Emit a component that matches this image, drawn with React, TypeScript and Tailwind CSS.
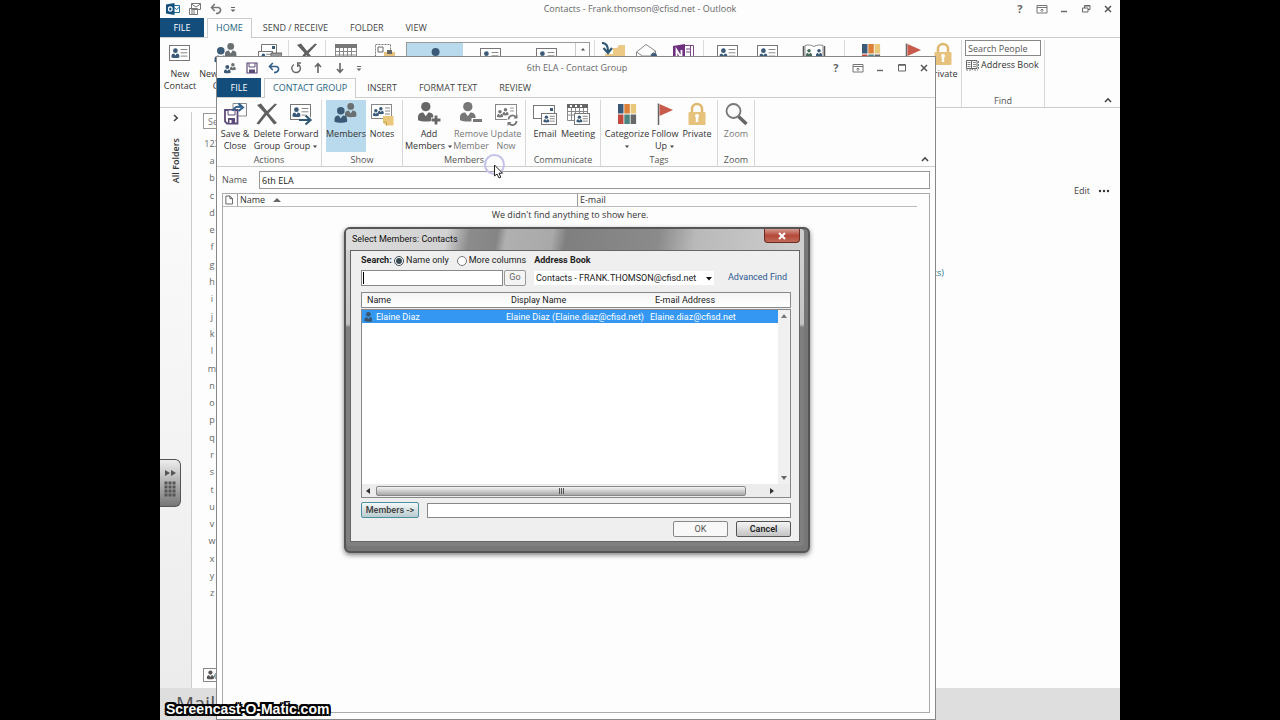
import type { ReactNode } from "react";

const LETTERS = "abcdefghijklmnopqrstuvwxyz".split("");

/* ---------- glyph parts ---------- */

const Person = ({ x = 0, y = 0, s = 1, fill = "#3b5a78" }) => (
  <g transform={`translate(${x} ${y}) scale(${s})`} fill={fill}>
    <circle cx="6" cy="3.6" r="3.6" />
    <path d="M0 14v-2.5C0 9 2 8 4 8l2 3 2-3c2 0 4 1 4 3.500V14c-3 1.300-9 1.300-12 0z" />
  </g>
);

const Card = ({ x = 0, y = 0, w = 20, h = 15, color = "#3b5a78" }) => (
  <g>
    <rect x={x + 0.5} y={y + 0.5} width={w} height={h} fill="#fff" stroke="#777" />
    <Person x={x + 2.5} y={y + h * 0.22} s={h / 23} fill={color} />
    <path
      d={`M${x + w * 0.58} ${y + h * 0.3}h${w * 0.34}M${x + w * 0.58} ${y + h * 0.52}h${w * 0.34}M${x + w * 0.58} ${y + h * 0.74}h${w * 0.34}`}
      stroke="#888"
    />
  </g>
);

const Svg = ({ children, className = "size-6" }: { children: ReactNode; className?: string }) => (
  <svg viewBox="0 0 24 24" fill="none" className={`shrink-0 ${className}`} aria-hidden="true">
    {children}
  </svg>
);

const CardIcon = () => (
  <Svg>
    <Card x={1} y={3} />
  </Svg>
);

const PeopleIcon = () => (
  <Svg>
    <Person x={11} y={1} s={0.95} fill="#6a7072" />
    <Person x={0.5} y={5} s={1.05} />
  </Svg>
);

const SaveCloseIcon = () => (
  <Svg>
    <path d="M10 1.500h13.500v12.500H10z" fill="#fff" stroke="#888" />
    <path d="M2 8h12.500v13.500H4L2 19.500z" fill="#fff" stroke="#5c4a78" strokeWidth="1.800" />
    <path d="M5 8h7v5H5z" fill="#fff" stroke="#5c4a78" />
    <path d="M5 16h7v6H5z" fill="#5c4a78" />
    <path d="M6.500 18h2v3h-2z" fill="#fff" />
    <path d="M10 9c1-4 4-5 8-4M15.500 1.500l4.500 4-4.500 3.500" stroke="#2f5f8a" strokeWidth="2" />
  </Svg>
);

const DeleteIcon = () => (
  <Svg>
    <path d="M2 3l4-1.500 6 7.500 8-7.500 2 .8-8.400 9L22 21l-3 1.500-7.500-9.500L4 22.500l-2.500-1L9.500 11z" fill="#606060" />
  </Svg>
);

const ForwardIcon = () => (
  <Svg>
    <Card x={1} y={2} />
    <path d="M10 18h11M16.500 13l5 5-5 5" stroke="#fff" strokeWidth="4" />
    <path d="M10 18h11.500M16.500 13.500l5 4.500-5 4.500" stroke="#2f5875" strokeWidth="2.200" />
  </Svg>
);

const NotesIcon = () => (
  <Svg>
    <rect x="1.500" y="2.500" width="20" height="14" fill="#fff" stroke="#888" />
    <Person x={3} y={7} s={0.48} />
    <Person x={8} y={5} s={0.48} />
    <path d="M15 6h5M15 9h5M15 12h5" stroke="#888" />
    <path d="M13 14h10.500v9.500H16l-3-3z" fill="#e9c77b" />
    <path d="M13 20h3.500v3.500" stroke="#c9a556" />
  </Svg>
);

const AddMemberIcon = () => (
  <Svg>
    <Person x={1} y={0} s={1.3} fill="#666" />
    <path d="M19 13v10M14 18h10" stroke="#fff" strokeWidth="5" />
    <path d="M19 13.500v9M14.500 18h9" stroke="#666" strokeWidth="2.800" />
  </Svg>
);

const RemoveMemberIcon = () => (
  <Svg>
    <Person x={1} y={0} s={1.3} fill="#777" />
    <path d="M12.500 18.500H24" stroke="#fff" strokeWidth="5" />
    <path d="M14 18.500h9" stroke="#777" strokeWidth="3" />
  </Svg>
);

const UpdateIcon = () => (
  <Svg>
    <rect x="1.500" y="2.500" width="21" height="15" fill="#fff" stroke="#888" />
    <Person x={3} y={8} s={0.5} fill="#777" />
    <Person x={8.500} y={6} s={0.5} fill="#777" />
    <path d="M16 6h4M16 9h4" stroke="#999" />
    <circle cx="18.500" cy="18" r="5.500" fill="#fff" />
    <path d="M14.500 17.500a4 4 0 0 1 7.500-2M22.500 19a4 4 0 0 1-7.500 2" stroke="#777" strokeWidth="1.800" />
    <path d="M23.500 12.500v4h-4zM13.500 24v-4h4z" fill="#777" />
  </Svg>
);

const EmailIcon = () => (
  <Svg>
    <rect x=".5" y="3.500" width="21" height="13" fill="#fff" stroke="#777" />
    <path d="M17 6h3v3h-3z" fill="#3b5a78" />
    <Card x={8} y={11} w={15} h={11} />
  </Svg>
);

const MeetingIcon = () => (
  <Svg>
    <path d="M1.500 2.500h20v16h-20zM1.500 9.500h20M1.500 13h20M5.500 5v13.500M9.500 5v13.500M13.500 5v13.500M17.500 5v13.500" fill="#fff" stroke="#888" />
    <path d="M1 2h21v4H1z" fill="#666" />
    <path d="M4 3h2v2H4zM9 3h2v2H9zM14 3h2v2h-2z" fill="#fff" />
    <Card x={8} y={11} w={15} h={11} />
  </Svg>
);

const CalendarIcon = () => (
  <Svg>
    <path d="M1.500 2.500h21v18h-21zM1.500 9.500h21M1.500 13h21M5.500 5v15M9.500 5v15M13.500 5v15M17.500 5v15" fill="#fff" stroke="#888" />
    <path d="M1 2h22v4H1z" fill="#777" />
  </Svg>
);

const CategorizeIcon = () => (
  <Svg>
    <path d="M3 2h5.500v9.500H3z" fill="#3b5a78" />
    <path d="M9.300 2h5.500v9.500H9.300z" fill="#dd7f35" />
    <path d="M15.600 2h5.500v9.500h-5.500z" fill="#e9c77b" />
    <path d="M3 12.500h5.500V22H3z" fill="#c4493d" />
    <path d="M9.300 12.500h5.500V22H9.300z" fill="#4d8580" />
    <path d="M15.600 12.500h5.500V22h-5.500z" fill="#686868" />
  </Svg>
);

const FlagIcon = () => (
  <Svg>
    <path d="M5.500 1.500V23" stroke="#666" strokeWidth="1.500" />
    <path d="M6.500 2L20 8 6.500 14z" fill="#c75a49" />
  </Svg>
);

const LockIcon = () => (
  <Svg>
    <path d="M7 11V7a5 5 0 0 1 10 0v4" stroke="#deb86e" strokeWidth="2.500" />
    <rect x="3.500" y="10" width="17" height="13" rx="1" fill="#e6c27c" />
    <path d="M10 14a2 2 0 1 1 3.200 1.500V20h-2.400v-4.500z" fill="#fff" />
  </Svg>
);

const ZoomIcon = () => (
  <Svg>
    <circle cx="9.500" cy="9" r="7" fill="#fafafa" stroke="#777" strokeWidth="1.800" />
    <path d="M14.500 14.500l8 7.500" stroke="#666" strokeWidth="3.500" />
  </Svg>
);

const MoveIcon = () => (
  <Svg>
    <path d="M12 6h4l2-3h6v20H4V12h8z" fill="#ecca85" />
    <path d="M1 1c4 0 6 2 6 8M2.500 6L7 11l4-5" stroke="#2f5875" strokeWidth="2.200" />
  </Svg>
);

const EnvelopeIcon = () => (
  <Svg>
    <path d="M1.500 10L11 2.500 20.500 9v10h-19z" fill="#fff" stroke="#888" />
    <path d="M1.500 10l6 4h7l6-5" stroke="#888" />
    <circle cx="19" cy="14" r="3" fill="#3b5a78" />
  </Svg>
);

const OneNoteIcon = () => (
  <Svg>
    <path d="M13 3.500h9.500v17H13zM15 7h5M15 10h5M19.500 4v16" fill="#fff" stroke="#7c4a86" />
    <path d="M2 4l12-2v21L2 21z" fill="#6f2f7f" />
    <path d="M5.500 16V8l5 8V8" stroke="#fff" strokeWidth="1.800" />
  </Svg>
);

const BookIcon = () => (
  <Svg>
    <path d="M1.500 4v17M12 5v16M22.500 4v17" stroke="#555" strokeWidth="1.500" />
    <path d="M3 3.500c3-1 6-.5 9 1 3-1.500 6-2 9-1V20H3z" fill="#fff" stroke="#888" />
    <Person x={4} y={7} s={0.5} fill="#456b5a" />
    <Person x={14} y={7} s={0.5} />
  </Svg>
);

const ItemsIcon = () => (
  <Svg>
    <path d="M3.500 2.500h15v11h-15z" fill="#fff" stroke="#777" />
    <path d="M14 4h3v3h-3z" fill="#3b5a78" />
    <Card x={0} y={9} w={14} h={11} />
    <path d="M13 11h11v11H13z" fill="#999" stroke="#666" />
  </Svg>
);

const ClipIcon = () => (
  <Svg>
    <path d="M3.500 2.500h15v18h-15z" fill="#fff" stroke="#777" strokeDasharray="2 1" />
    <path d="M6 5h5v5H6z" fill="#fff" stroke="#666" />
    <path d="M12 10h11v12H12z" fill="#e6c27c" />
    <path d="M15 8h5v4h-5z" fill="#666" />
  </Svg>
);

const OutlookLogo = () => (
  <svg viewBox="0 0 14 12" className="h-3 w-3.5" fill="none" aria-hidden="true">
    <path d="M7 2.500h6.500v7H7zM7.500 4l3 2.500 3-2.500" fill="#fff" stroke="#1a6fa5" />
    <path d="M0 1.500L8.500 0v12L0 10.500z" fill="#14507e" />
    <ellipse cx="4.300" cy="6" rx="1.800" ry="2.200" stroke="#fff" strokeWidth="1.200" />
  </svg>
);

const SendReceiveIcon = () => (
  <svg viewBox="0 0 14 14" className="size-3.5" fill="none" aria-hidden="true">
    <path d="M3.500 1.500h9v6h-9zM3.500 2l4.500 3 4.500-3M1.500 6.500h8v6h-8zM3 9h4M3 11h4" fill="#fff" stroke="#777" />
  </svg>
);

const UndoIcon = ({ color = "#777" }) => (
  <svg viewBox="0 0 12 12" className="size-3" fill="none" stroke={color} strokeWidth="1.600" aria-hidden="true">
    <path d="M1.500 4.500H8a2.500 2.500 0 0 1 2.500 3.200C10 9.500 8.500 10.500 6 10.500M4.800 1L1.500 4.500 4.800 8" />
  </svg>
);

const RedoIcon = () => (
  <svg viewBox="0 0 12 12" className="size-3" fill="none" stroke="#666" strokeWidth="1.400" aria-hidden="true">
    <path d="M4 2.500A4.300 4.300 0 1 0 8.500 2.700M7 1h4M7.700 1v4" />
  </svg>
);

const ArrowIcon = ({ down = false }) => (
  <svg viewBox="0 0 12 12" className="size-3" fill="none" stroke="#666" strokeWidth="1.600" aria-hidden="true">
    <path d={down ? "M6 1v9M3 7l3 3.300L9 7" : "M6 11V2M3 5l3-3.300L9 5"} />
  </svg>
);

const FloppyIcon = () => (
  <svg viewBox="0 0 12 12" className="size-3" fill="none" aria-hidden="true">
    <path d="M1 1h10v10H1z" fill="#fff" stroke="#5c4a78" strokeWidth="1.200" />
    <path d="M3 1v4h6V1" stroke="#5c4a78" />
    <path d="M3 7.500h6V11H3z" fill="#5c4a78" />
  </svg>
);

const MoreIcon = () => (
  <svg viewBox="0 0 6 8" className="h-2 w-1.5" aria-hidden="true">
    <path d="M1 2.500h4" stroke="#666" />
    <path d="M.5 4.500h5L3 7z" fill="#666" />
  </svg>
);

const Caret = () => (
  <svg viewBox="0 0 6 4" className="inline-block h-1 w-1.5 align-middle" aria-hidden="true">
    <path d="M1 .5h4L3 3z" fill="#444" />
  </svg>
);

const ChevronUp = () => (
  <svg viewBox="0 0 8 6" className="h-1.5 w-2" fill="none" stroke="#444" strokeWidth="1.600" aria-hidden="true">
    <path d="M1 5l3-3.200L7 5" />
  </svg>
);

const AddressBookIcon = () => (
  <svg viewBox="0 0 14 12" className="h-3 w-3.5" fill="none" aria-hidden="true">
    <path d="M1.500 1.500h5v8h-5zM6.500 1.500h5.500v8H6.500z" fill="#fff" stroke="#666" />
    <path d="M2.500 3.500h3M2.500 5.500h3M2.500 7.500h3M8 3.500h3M8 5.500h3M8 7.500h3" stroke="#888" />
    <path d="M13.500 2v8M1 11h5l1-1 1 1h5" stroke="#777" strokeDasharray="2 1" />
  </svg>
);

/* ---------- window chrome ---------- */

const Caption = ({ restore = false }) => (
  <div className="flex items-center gap-2.5">
    <button type="button" aria-label="Help" className="w-3 text-[11px] font-bold leading-3 text-[#666]">
      ?
    </button>
    <button type="button" aria-label="Ribbon display options">
      <svg viewBox="0 0 12 12" className="size-3" fill="none" stroke="#777">
        <path d="M1 2.500h10v7.500H1zM1 4.500h10M6 9V6M4.500 7.500L6 6l1.500 1.500" />
      </svg>
    </button>
    <button type="button" aria-label="Minimize">
      <svg viewBox="0 0 12 12" className="size-3" stroke="#666" strokeWidth="1.400">
        <path d="M3 8.500h6" />
      </svg>
    </button>
    <button type="button" aria-label={restore ? "Restore" : "Maximize"}>
      <svg viewBox="0 0 12 12" className="size-3" fill="none" stroke="#666">
        {restore ? (
          <path d="M2.500 5h5.500v4H2.500zM4.500 5V2.500H10v4H8M4.500 3H10" />
        ) : (
          <path d="M2.500 2.500h7v6.500h-7zM2.500 3.300h7" />
        )}
      </svg>
    </button>
    <button type="button" aria-label="Close">
      <svg viewBox="0 0 12 12" className="size-3" stroke="#555" strokeWidth="1.500">
        <path d="M3 3l6 6M9 3l-6 6" />
      </svg>
    </button>
  </div>
);

type BigButtonProps = {
  icon: ReactNode;
  lines?: string[];
  caret?: boolean;
  label?: string;
  width: string;
  active?: boolean;
  muted?: boolean;
};

const BigButton = ({ icon, lines = [], caret, label, width, active, muted }: BigButtonProps) => (
  <button
    type="button"
    aria-label={label}
    className={`flex h-13 shrink-0 flex-col items-center whitespace-nowrap leading-3 ${width} ${active ? "bg-[#b9d9ec]" : ""} ${muted ? "text-[#777]" : "text-[#333]"}`}
  >
    <span className="mb-0.5 mt-0.5">{icon}</span>
    {lines.map((line, i) => (
      <span key={line} className="h-3">
        {line}
        {caret && i === 1 && (
          <span className="ml-0.5">
            <Caret />
          </span>
        )}
      </span>
    ))}
    {caret && lines.length === 1 && (
      <span className="h-3">
        <Caret />
      </span>
    )}
  </button>
);

const Group = ({ title, children }: { title: string; children: ReactNode }) => (
  <div className="flex shrink-0 flex-col justify-between border-r border-[#d8d8d8] px-1">
    <div className="flex">{children}</div>
    <div className="text-center leading-3 text-[#555]">{title}</div>
  </div>
);

const Divider = () => <div className="h-16 w-px shrink-0 bg-[#dcdcdc]" />;

const Tab = ({ children, active }: { children: ReactNode; active?: boolean }) => (
  <button
    type="button"
    className={
      active
        ? "-mb-px h-5 border border-b-0 border-[#ccc] bg-[#fdfdfd] px-2 pb-0.5 text-[#1e6580]"
        : "h-[19px] px-[11px] text-[#444]"
    }
  >
    {children}
  </button>
);

const FileTab = () => (
  <button type="button" className="mr-[3px] h-[19px] w-11 bg-[#124d7c] text-white">
    FILE
  </button>
);

/* ---------- main window ---------- */

const MainWindow = () => (
  <div className="flex h-full flex-col">
    <header className="flex h-[18px] items-center justify-between pl-1.5 pr-1.5">
      <div className="flex w-40 items-center gap-2">
        <OutlookLogo />
        <SendReceiveIcon />
        <UndoIcon />
        <MoreIcon />
      </div>
      <h1 className="text-[#666]">Contacts - Frank.thomson@cfisd.net - Outlook</h1>
      <div className="flex w-40 justify-end">
        <Caption restore />
      </div>
    </header>
    <nav className="flex border-b border-[#ccc]">
      <FileTab />
      <Tab active>HOME</Tab>
      <Tab>SEND / RECEIVE</Tab>
      <Tab>FOLDER</Tab>
      <Tab>VIEW</Tab>
    </nav>

    <div className="flex h-[70px] shrink-0 items-stretch overflow-hidden border-b border-[#ccc] pt-0.5">
      <BigButton width="w-10" icon={<CardIcon />} lines={["New", "Contact"]} />
      <BigButton width="w-13" icon={<PeopleIcon />} lines={["New Contact", "Group"]} />
      <BigButton width="w-9" icon={<ItemsIcon />} label="New Items" />
      <Divider />
      <BigButton width="w-9" icon={<DeleteIcon />} label="Delete" />
      <Divider />
      <BigButton width="w-10" icon={<CalendarIcon />} label="Meeting" />
      <BigButton width="w-9" icon={<ClipIcon />} label="More" />
      <div className="mx-1 mt-0.5 flex h-14 w-[184px] shrink-0 border border-[#999]">
        <BigButton width="w-14" icon={<Svg><Person x={6} y={3} s={1.1} /></Svg>} label="People" active />
        <BigButton width="w-14" icon={<CardIcon />} label="Business Card" />
        <BigButton width="w-14" icon={<CardIcon />} label="Card" />
        <div className="flex flex-1 justify-center border-l border-[#ccc] pt-1">
          <svg viewBox="0 0 6 4" className="h-1 w-1.5" aria-hidden="true">
            <path d="M1 3.500h4L3 1z" fill="#555" />
          </svg>
        </div>
      </div>
      <Divider />
      <BigButton width="w-9" icon={<MoveIcon />} label="Move" />
      <BigButton width="w-8" icon={<EnvelopeIcon />} label="Mail Merge" />
      <BigButton width="w-10" icon={<OneNoteIcon />} label="OneNote" />
      <Divider />
      <BigButton width="w-12" icon={<CardIcon />} label="Forward Contact" />
      <BigButton width="w-8" icon={<CardIcon />} label="Share Contacts" />
      <BigButton width="w-15" icon={<BookIcon />} label="Open Shared Contacts" />
      <Divider />
      <BigButton width="w-13" icon={<CategorizeIcon />} label="Categorize" />
      <BigButton width="w-8" icon={<FlagIcon />} label="Follow Up" />
      <BigButton width="w-7" icon={<LockIcon />} lines={["Private"]} />
      <div className="ml-1 flex flex-col justify-between border-x border-[#d8d8d8] px-[3px]">
        <div>
          <input
            aria-label="Search People"
            placeholder="Search People"
            className="block h-4 w-[76px] border border-[#888] bg-white px-0.5 placeholder:text-[#555]"
          />
          <button type="button" className="mt-0.5 flex items-center gap-0.5 whitespace-nowrap text-[#333]">
            <AddressBookIcon />
            Address Book
          </button>
        </div>
        <div className="text-center leading-3 text-[#555]">Find</div>
      </div>
      <button type="button" aria-label="Collapse the ribbon" className="ml-auto self-end pb-1 pr-2">
        <ChevronUp />
      </button>
    </div>

    <div className="flex min-h-0 flex-1">
      <aside className="mt-1 flex w-8 shrink-0 flex-col items-center border-r border-[#ccc] bg-linear-to-b from-[#fdfdfd] to-[#ececec]">
        <button type="button" aria-label="Expand the folder pane" className="rotate-90 p-1 pl-0.5">
          <ChevronUp />
        </button>
        <span className="mt-3 rotate-180 font-semibold leading-4 text-[#333] [writing-mode:vertical-rl]">All Folders</span>
      </aside>
      <section className="flex w-60 shrink-0 flex-col items-start pl-[11px] pt-[5px]">
        <input
          aria-label="Search Contacts"
          placeholder="Search Contacts"
          className="mb-1.5 h-4 w-52 border border-[#999] px-1 placeholder:text-[#777]"
        />
        <ul className="flex min-h-0 w-4.5 flex-1 flex-col items-center text-[#666]">
          {["123", ...LETTERS].map((l) => (
            <li key={l} className="flex flex-1 items-center leading-3">
              {l}
            </li>
          ))}
        </ul>
        <div className="mb-1.5 mt-[66px] flex h-3.5 w-6 items-center border border-[#888] px-0.5">
          <svg viewBox="0 0 20 12" className="h-3 w-5" fill="none" aria-hidden="true">
            <Person x={1} y={1} s={0.65} fill="#555" />
            <circle cx="13" cy="7" r="3.500" stroke="#55707a" />
            <path d="M9.500 7h7M13 3.500v7" stroke="#55707a" />
          </svg>
        </div>
      </section>
      <section className="flex-1 pt-[75px] text-right">
        <div className="flex items-center justify-end gap-2 pr-2.5 leading-4 text-[#444]">
          <button type="button">Edit</button>
          <button type="button" aria-label="More actions">
            <svg viewBox="0 0 12 4" className="h-1 w-3" fill="#333" aria-hidden="true">
              <circle cx="2" cy="2" r="1.200" />
              <circle cx="6" cy="2" r="1.200" />
              <circle cx="10" cy="2" r="1.200" />
            </svg>
          </button>
        </div>
        <a href="#contacts" className="mr-44 mt-16 inline-block pt-0.5 leading-4 text-[#2a7a92]">
          (Contacts)
        </a>
      </section>
    </div>
    <footer className="h-8 shrink-0 bg-[#dedede] pl-4 text-[20px] leading-8 text-[#555]">Mail</footer>
  </div>
);

/* ---------- contact group window ---------- */

const ContactGroupWindow = () => (
  <div className="absolute bottom-0 left-14 right-46 top-14 flex flex-col border border-[#888] bg-[#fdfdfd]">
    <header className="flex h-[21px] items-center justify-between pl-[7px] pr-[5px]">
      <div className="flex w-40 items-center gap-2.5">
        <svg viewBox="0 0 12 12" className="size-3" aria-hidden="true">
          <Person x={6} y={1} s={0.48} fill="#6a7072" />
          <Person x={0} y={3} s={0.55} />
        </svg>
        <FloppyIcon />
        <UndoIcon color="#2f5f8a" />
        <RedoIcon />
        <ArrowIcon />
        <ArrowIcon down />
        <MoreIcon />
      </div>
      <h2 className="text-[#666]">6th ELA - Contact Group</h2>
      <div className="flex w-40 justify-end">
        <Caption />
      </div>
    </header>
    <nav className="flex border-b border-[#ccc]">
      <FileTab />
      <Tab active>CONTACT GROUP</Tab>
      <Tab>INSERT</Tab>
      <Tab>FORMAT TEXT</Tab>
      <Tab>REVIEW</Tab>
    </nav>
    <div className="flex h-[69px] shrink-0 border-b border-[#ccc] pt-0.5">
      <Group title="Actions">
        <BigButton width="w-7" icon={<SaveCloseIcon />} lines={["Save &", "Close"]} />
        <BigButton width="w-9" icon={<DeleteIcon />} lines={["Delete", "Group"]} />
        <BigButton width="w-8" icon={<ForwardIcon />} lines={["Forward", "Group"]} caret />
      </Group>
      <Group title="Show">
        <BigButton width="w-10" icon={<PeopleIcon />} lines={["Members"]} active />
        <BigButton width="w-8" icon={<NotesIcon />} lines={["Notes"]} />
      </Group>
      <Group title="Members">
        <BigButton width="w-11" icon={<AddMemberIcon />} lines={["Add", "Members"]} caret />
        <BigButton width="w-10" icon={<RemoveMemberIcon />} lines={["Remove", "Member"]} muted />
        <BigButton width="w-[30px]" icon={<UpdateIcon />} lines={["Update", "Now"]} muted />
      </Group>
      <Group title="Communicate">
        <BigButton width="w-[30px]" icon={<EmailIcon />} lines={["Email"]} />
        <BigButton width="w-9" icon={<MeetingIcon />} lines={["Meeting"]} />
      </Group>
      <Group title="Tags">
        <BigButton width="w-11" icon={<CategorizeIcon />} lines={["Categorize"]} caret />
        <BigButton width="w-8" icon={<FlagIcon />} lines={["Follow", "Up"]} caret />
        <BigButton width="w-8" icon={<LockIcon />} lines={["Private"]} />
      </Group>
      <Group title="Zoom">
        <BigButton width="w-7" icon={<ZoomIcon />} lines={["Zoom"]} muted />
      </Group>
      <button type="button" aria-label="Collapse the ribbon" className="ml-auto self-end pb-1 pr-1.5">
        <ChevronUp />
      </button>
    </div>
    <div className="flex min-h-0 flex-1 flex-col gap-1 px-[5px] pb-1.5 pt-1">
      <div className="flex items-center">
        <label htmlFor="group-name" className="w-[37px] text-[#555]">
          Name
        </label>
        <input
          id="group-name"
          defaultValue="6th ELA"
          className="h-[18px] min-w-0 flex-1 border border-[#999] bg-white px-0.5 text-[#222]"
        />
      </div>
      <div className="flex-1 border border-[#aaa] pr-3">
        <table className="w-full text-left leading-3 text-[#333]">
          <thead>
            <tr className="border-b border-[#bbb]">
              <th className="w-[51%] pl-0.5 font-normal">
                <span className="flex items-center gap-1">
                  <svg viewBox="0 0 9 10" className="h-2.5 w-2" fill="#fff" stroke="#555" aria-hidden="true">
                    <path d="M1 .5h4.500l3 3v6H1zM5.500.5v3h3" />
                  </svg>
                  <span className="border-l border-[#999] pl-0.5">Name</span>
                  <svg viewBox="0 0 8 4" className="ml-1 h-1 w-2" aria-hidden="true">
                    <path d="M0 4h8L4 0z" fill="#666" />
                  </svg>
                </span>
              </th>
              <th className="font-normal">
                <span className="block border-l border-[#999] pl-0.5">E-mail</span>
              </th>
            </tr>
          </thead>
          <tbody>
            <tr>
              <td colSpan={2} className="pt-0.5 text-center">
                We didn&apos;t find anything to show here.
              </td>
            </tr>
          </tbody>
        </table>
      </div>
    </div>
  </div>
);

/* ---------- select members dialog ---------- */

const SelectMembersDialog = () => (
  <div
    role="dialog"
    aria-label="Select Members: Contacts"
    className="absolute left-46 top-[227px] w-[466px] rounded-md border-2 border-[#555] bg-[#777] pb-[5px] pr-1 font-['Roboto',sans-serif] shadow-[0_2px_5px_rgba(0,0,0,0.5)]"
  >
    <div className="rounded-sm bg-linear-to-b from-[#d4d4d4] via-[#c4c4c4] via-30% to-[#808080] to-31% px-1 pb-1">
      <div className="-mx-1 flex h-[21px] items-start justify-between rounded-t-sm bg-[linear-gradient(100deg,#dcdcdc_0%,#d2d2d2_22%,#8c8c8c_27%,#858585_33%,#b0b0b0_35%,#a9a9a9_45%,#7f7f7f_48%,#8b8b8b_68%,#b9b9b9_76%,#cfcfcf_100%)] pl-1.5 pr-1">
        <h3 className="leading-5 text-[#111]">Select Members: Contacts</h3>
        <button
          type="button"
          aria-label="Close"
          className="flex h-3.5 w-9 items-center justify-center rounded-b-sm border border-t-0 border-[#6b2a22] bg-linear-to-b from-[#d49a90] via-[#b3493a] to-[#c26a58]"
        >
          <svg viewBox="0 0 8 8" className="size-2" stroke="#fff" strokeWidth="2" aria-hidden="true">
            <path d="M1 1l6 6M7 1L1 7" />
          </svg>
        </button>
      </div>
      <form
        className="flex flex-col border border-[#666] bg-[#efefef] pb-1 pl-2.5 pr-2 pt-1 text-[#222]"
        onSubmit={(e) => e.preventDefault()}
      >
        <div className="flex h-3 items-center">
          <span className="w-[33px] font-bold">Search:</span>
          <label className="flex items-center gap-0.5">
            <input type="radio" name="scope" defaultChecked className="size-2.5 accent-[#3a4a55]" />
            Name only
          </label>
          <label className="ml-2 flex items-center gap-0.5">
            <input type="radio" name="scope" className="size-2.5" />
            More columns
          </label>
          <label htmlFor="address-book" className="ml-2 font-bold">
            Address Book
          </label>
        </div>
        <div className="mt-[3px] flex items-center">
          <div className="relative">
            <input aria-label="Search" className="block h-4 w-[142px] border border-[#888] bg-white px-0.5" />
            <span className="absolute left-0.5 top-0.5 h-3 w-px bg-black" />
          </div>
          <button type="button" className="ml-px h-4 w-[22px] rounded-xs border border-[#999] bg-[#f4f4f4] text-[#666]">
            Go
          </button>
          <div className="relative ml-2">
            <select
              id="address-book"
              className="block h-3.5 w-[180px] appearance-none bg-white pl-0.5 leading-3"
            >
              <option>Contacts - FRANK.THOMSON@cfisd.net</option>
            </select>
            <svg viewBox="0 0 6 4" className="pointer-events-none absolute right-0.5 top-1.5 h-1 w-1.5" aria-hidden="true">
              <path d="M0 0h6L3 3.500z" fill="#111" />
            </svg>
          </div>
          <a href="#advanced" className="ml-3.5 whitespace-nowrap text-[#2d5791]">
            Advanced Find
          </a>
        </div>

        <div className="relative mt-1.5">
          <table className="block leading-3">
            <thead className="block border border-[#888] bg-linear-to-b from-[#f4f4f4] to-white">
              <tr className="flex h-3.5 items-center text-left">
                <th className="w-36 pl-[5px] font-normal">Name</th>
                <th className="w-36 pl-[5px] font-normal">Display Name</th>
                <th className="pl-[5px] font-normal">E-mail Address</th>
              </tr>
            </thead>
            <tbody className="mt-px block h-[189px] border border-[#888] bg-white">
              <tr className="mr-3 flex h-[13px] items-center whitespace-nowrap bg-[#3497f2] text-white">
                <td className="flex w-36 items-center gap-1 pl-0.5">
                  <svg viewBox="0 0 8 10" className="h-2.5 w-2" aria-hidden="true">
                    <Person x={0.500} y={0} s={0.65} fill="#3c5568" />
                  </svg>
                  Elaine Diaz
                </td>
                <td className="w-36">Elaine Diaz (Elaine.diaz@cfisd.net)</td>
                <td>Elaine.diaz@cfisd.net</td>
              </tr>
            </tbody>
          </table>
          <div className="absolute bottom-3.5 right-px top-[18px] flex w-3 flex-col items-center justify-between bg-[#f0f0f0] py-1">
            <svg viewBox="0 0 6 4" className="h-1 w-1.5" aria-hidden="true">
              <path d="M0 4h6L3 0z" fill="#777" />
            </svg>
            <svg viewBox="0 0 6 4" className="h-1 w-1.5" aria-hidden="true">
              <path d="M0 0h6L3 4z" fill="#666" />
            </svg>
          </div>
          <div className="absolute inset-x-px bottom-px flex h-[13px] items-center bg-[#ececec] pl-1 pr-4">
            <svg viewBox="0 0 4 6" className="h-1.5 w-1" aria-hidden="true">
              <path d="M4 0v6L0 3z" fill="#333" />
            </svg>
            <span className="ml-1.5 flex h-2.5 flex-1 items-center justify-center gap-px rounded-xs border border-[#888] bg-linear-to-b from-[#f4f4f4] to-[#a8a8a8]">
              <i className="h-1.5 w-px bg-[#555]" />
              <i className="h-1.5 w-px bg-[#555]" />
              <i className="h-1.5 w-px bg-[#555]" />
            </span>
            <svg viewBox="0 0 4 6" className="ml-6 h-1.5 w-1" aria-hidden="true">
              <path d="M0 0v6l4-3z" fill="#333" />
            </svg>
          </div>
        </div>

        <div className="mt-1 flex items-center gap-2">
          <button
            type="button"
            className="h-4 w-[58px] rounded-xs border border-[#4d8f9f] bg-linear-to-b from-[#f4f8f8] to-[#b9ccd0] font-semibold leading-3 text-[#444]"
          >
            Members -&gt;
          </button>
          <input aria-label="Members" className="h-[15px] min-w-0 flex-1 border border-[#888] bg-white px-0.5" />
        </div>
        <div className="mt-[3px] flex justify-end gap-2">
          <button type="button" className="h-4 w-[55px] rounded-xs border border-[#888] bg-[#f8f8f8] leading-3 text-[#555]">
            OK
          </button>
          <button
            type="submit"
            className="h-4 w-[55px] rounded-xs border border-[#555] bg-linear-to-b from-[#f4f4f4] to-[#c4c4c4] font-semibold leading-3"
          >
            Cancel
          </button>
        </div>
      </form>
    </div>
  </div>
);

export default function App() {
  return (
    <div className="min-h-screen bg-black">
      <main className="relative mx-auto h-screen w-3/4 overflow-hidden bg-[#fdfdfd] font-['Open_Sans',sans-serif] text-[9px]">
        <MainWindow />
        <ContactGroupWindow />
        <SelectMembersDialog />

        {/* recorder toolbar handle */}
        <button
          type="button"
          aria-label="Open toolbar"
          className="absolute left-0 top-[459px] flex h-12 w-[21px] flex-col items-center justify-center gap-1 rounded-r-md border border-l-0 border-[#555] bg-linear-to-b from-[#eee] to-[#777]"
        >
          <svg viewBox="0 0 12 8" className="h-2 w-3" fill="#555" aria-hidden="true">
            <path d="M1 1l5 3-5 3zM7 1l5 3-5 3z" />
          </svg>
          <svg viewBox="0 0 12 16" className="h-4 w-3" stroke="#555" strokeWidth="3" strokeDasharray="3 1" aria-hidden="true">
            <path d="M.5 2h11M.5 6h11M.5 10h11M.5 14h11" />
          </svg>
        </button>

        {/* pointer */}
        <svg viewBox="0 0 24 28" className="pointer-events-none absolute left-[323px] top-[153px] h-7 w-6" fill="none" aria-hidden="true">
          <circle cx="11.500" cy="11.500" r="9.500" stroke="#c3c1ea" strokeWidth="2" />
          <path d="M11.500 12v11l2.500-2 2 4 1.800-.8-1.800-4h3.500z" fill="#fff" stroke="#222" />
        </svg>

        <p className="absolute bottom-[3px] left-1.5 font-['Liberation_Sans',sans-serif] text-[14px] font-bold leading-4 text-white [text-shadow:-2px_0_#000,2px_0_#000,0_-2px_#000,0_2px_#000,-2px_-2px_#000,2px_-2px_#000,-2px_2px_#000,2px_2px_#000]">
          Screencast-O-Matic.com
        </p>
      </main>
    </div>
  );
}
